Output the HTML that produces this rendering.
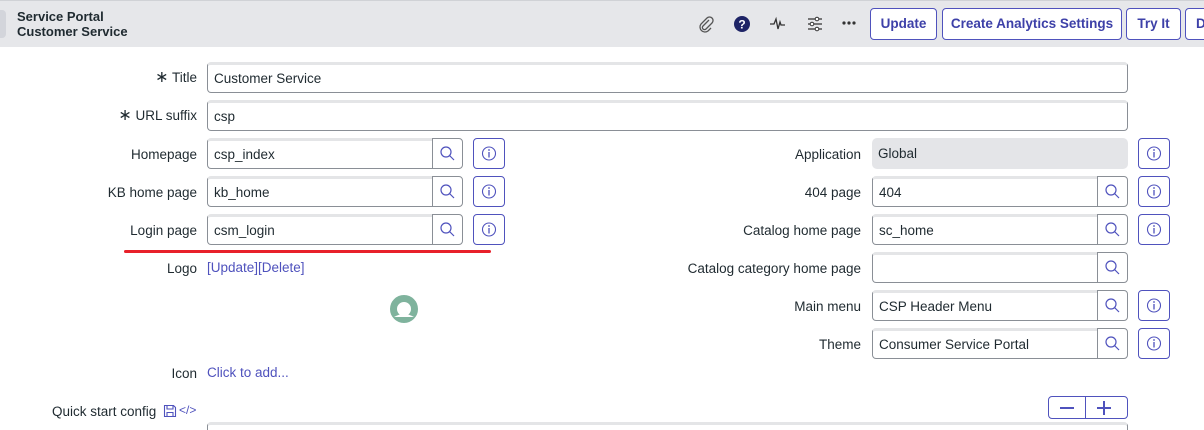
<!DOCTYPE html>
<html><head><meta charset="utf-8"><style>
*{box-sizing:border-box;margin:0;padding:0}
html,body{width:1204px;height:430px;overflow:hidden}
body{background:#fff;font-family:"Liberation Sans",sans-serif;font-size:13.5px;color:#1f2a30;position:relative}
.a{position:absolute}
.hdr{left:0;top:0;width:1204px;height:47px;background:#e6e7ea;border-top:1px solid #d0d2d6}
.tab{left:0;top:10px;width:6px;height:28px;background:#d3d5db;border-radius:0 4px 4px 0}
.ttl{left:17px;top:9px;font-weight:bold;font-size:13px;line-height:15px;color:#1f2a30}
.btn{position:absolute;top:8px;height:32px;border:1px solid #4f52bd;border-radius:4px;background:#fff;color:#3d40a8;font-weight:bold;font-size:13.5px;line-height:30px;text-align:center}
.lbl{position:absolute;text-align:right;line-height:18px}
.in{position:absolute;height:31px;border:1px solid #8a8f96;border-radius:4px;background:#fff;padding-left:6px;line-height:29px;border-top:3px solid #e4e5e7}
.in span{position:relative;top:-1px}
.inl{border-radius:4px 0 0 4px}
.sr{position:absolute;width:31px;height:31px;border:1px solid #8a8f96;border-radius:0 4px 4px 0;background:#fff}
.info{position:absolute;width:32px;height:31px;border:1px solid #4f52bd;border-radius:4px;background:#fff}
.link{color:#4f52bd}
</style></head><body>
<div class="a hdr"></div>
<div class="a tab"></div>
<div class="a ttl">Service Portal<br>Customer Service</div>
<svg class="a" style="left:696px;top:14px" width="20" height="20" viewBox="0 0 20 20"><path d="M13 6 L7 12 a2 2 0 0 0 3 3 L16 9 a3.5 3.5 0 0 0 -5 -5 L5 10 a5 5 0 0 0 7 7 L15 14" fill="none" stroke="#555" stroke-width="1.3"/></svg>
<svg class="a" style="left:733px;top:15px" width="18" height="18" viewBox="0 0 18 18"><circle cx="9" cy="9" r="8" fill="#1e2466"/><text x="9" y="13.5" text-anchor="middle" font-family="Liberation Sans" font-weight="bold" font-size="12" fill="#fff">?</text></svg>
<svg class="a" style="left:769px;top:15px" width="18" height="18" viewBox="0 0 18 18"><path d="M1 9 H5 L7 4 L9 14 L11 7 L12 10 H16" fill="none" stroke="#333" stroke-width="1.3"/></svg>
<svg class="a" style="left:806px;top:15px" width="18" height="18" viewBox="0 0 18 18"><path d="M2 4H16M2 9H16M2 14H16" stroke="#333" stroke-width="1.2"/><circle cx="11" cy="4" r="1.8" fill="#fff" stroke="#333"/><circle cx="6" cy="9" r="1.8" fill="#fff" stroke="#333"/><circle cx="11" cy="14" r="1.8" fill="#fff" stroke="#333"/></svg>
<svg class="a" style="left:841px;top:20px" width="16" height="6" viewBox="0 0 16 6"><circle cx="3" cy="3" r="1.6" fill="#333"/><circle cx="8" cy="3" r="1.6" fill="#333"/><circle cx="13" cy="3" r="1.6" fill="#333"/></svg>
<div class="btn" style="left:870px;width:67px">Update</div>
<div class="btn" style="left:942px;width:180px">Create Analytics Settings</div>
<div class="btn" style="left:1126px;width:55px">Try It</div>
<div class="btn" style="left:1185px;width:40px;text-align:left;padding-left:10px">D</div>

<div class="lbl" style="right:1007px;top:69px"><span style="font-size:16px">∗</span> Title</div>
<div class="in" style="left:207px;top:62px;width:921px"><span>Customer Service</span></div>
<div class="lbl" style="right:1007px;top:107px"><span style="font-size:16px">∗</span> URL suffix</div>
<div class="in" style="left:207px;top:100px;width:921px"><span>csp</span></div>

<div class="lbl" style="right:1007px;top:146px">Homepage</div>
<div class="lbl" style="right:1007px;top:184px">KB home page</div>
<div class="lbl" style="right:1007px;top:222px">Login page</div>
<div class="lbl" style="right:1007px;top:260px">Logo</div>
<div class="lbl" style="right:1007px;top:365px">Icon</div>
<div class="lbl" style="left:52px;top:403px">Quick start config</div>
<svg class="a" style="left:163px;top:404px" width="14" height="14" viewBox="0 0 14 14"><path d="M1.5 1.5H10.5L12.5 3.5V12.5H1.5Z M4 1.5V5H10V1.5 M4 12.5V8.5H10V12.5" fill="none" stroke="#4f52bd" stroke-width="1.1"/></svg>
<div class="a link" style="left:179px;top:403px;font-size:12px">&lt;/&gt;</div>

<div class="in inl" style="left:207px;top:138px;width:226px"><span>csp_index</span></div>
<div class="in inl" style="left:207px;top:176px;width:226px"><span>kb_home</span></div>
<div class="in inl" style="left:207px;top:214px;width:226px"><span>csm_login</span></div>
<div class="sr" style="left:432px;top:138px"></div><div class="sr" style="left:432px;top:176px"></div><div class="sr" style="left:432px;top:214px"></div>
<div class="info" style="left:473px;top:138px"></div><div class="info" style="left:473px;top:176px"></div><div class="info" style="left:473px;top:214px"></div>
<div class="a" style="left:124px;top:250px;width:367px;height:3px;background:#e8202a;border-radius:2px"></div>
<div class="a link" style="left:207px;top:260px">[Update][Delete]</div>
<svg class="a" style="left:389px;top:294px" width="30" height="30" viewBox="0 0 30 30"><circle cx="15" cy="15" r="10.5" fill="none" stroke="#7fb39d" stroke-width="7"/><path d="M5 23 Q15 17 25 23" fill="#fff"/></svg>
<div class="a link" style="left:207px;top:365px">Click to add...</div>

<div class="lbl" style="right:343px;top:146px">Application</div>
<div class="lbl" style="right:343px;top:184px">404 page</div>
<div class="lbl" style="right:343px;top:222px">Catalog home page</div>
<div class="lbl" style="right:343px;top:260px">Catalog category home page</div>
<div class="lbl" style="right:343px;top:298px">Main menu</div>
<div class="lbl" style="right:343px;top:336px">Theme</div>
<div class="a" style="left:872px;top:138px;width:256px;height:31px;background:#e4e5e8;border-radius:5px;padding-left:6px;line-height:31px">Global</div>
<div class="in inl" style="left:872px;top:176px;width:226px"><span>404</span></div>
<div class="in inl" style="left:872px;top:214px;width:226px"><span>sc_home</span></div>
<div class="in inl" style="left:872px;top:252px;width:226px"><span></span></div>
<div class="in inl" style="left:872px;top:290px;width:226px"><span>CSP Header Menu</span></div>
<div class="in inl" style="left:872px;top:328px;width:226px"><span>Consumer Service Portal</span></div>
<div class="sr" style="left:1097px;top:176px"></div><div class="sr" style="left:1097px;top:214px"></div><div class="sr" style="left:1097px;top:252px"></div><div class="sr" style="left:1097px;top:290px"></div><div class="sr" style="left:1097px;top:328px"></div>
<div class="info" style="left:1138px;top:138px"></div><div class="info" style="left:1138px;top:176px"></div><div class="info" style="left:1138px;top:214px"></div><div class="info" style="left:1138px;top:290px"></div><div class="info" style="left:1138px;top:328px"></div>

<div class="a" style="left:1048px;top:396px;width:80px;height:23px;border:1px solid #4f52bd;border-radius:4px;background:#fff"></div>
<div class="a" style="left:1085px;top:396px;width:1px;height:23px;background:#4f52bd"></div>
<div class="a" style="left:1060px;top:407px;width:14px;height:1.5px;background:#4f52bd"></div>
<div class="a" style="left:1097px;top:407px;width:14px;height:1.5px;background:#4f52bd"></div>
<div class="a" style="left:1103px;top:401px;width:1.5px;height:14px;background:#4f52bd"></div>
<div class="a" style="left:207px;top:422px;width:921px;height:8px;border:1px solid #8a8f96;border-bottom:none;border-radius:4px 4px 0 0;border-top:3px solid #e4e5e7"></div>

<script>
document.querySelectorAll('.sr').forEach(e=>{e.innerHTML='<svg width="29" height="29" viewBox="0 0 29 29"><circle cx="13" cy="13" r="5" fill="none" stroke="#4f52bd" stroke-width="1.2"/><path d="M16.5 16.5L21 21" stroke="#4f52bd" stroke-width="1.2"/></svg>'});
document.querySelectorAll('.info').forEach(e=>{e.innerHTML='<svg width="30" height="29" viewBox="0 0 30 29"><circle cx="15" cy="14.5" r="6.5" fill="none" stroke="#4f52bd" stroke-width="1.1"/><path d="M15 13V18.5" stroke="#4f52bd" stroke-width="1.3"/><circle cx="15" cy="11" r="0.9" fill="#4f52bd"/></svg>'});
</script>
</body></html>
